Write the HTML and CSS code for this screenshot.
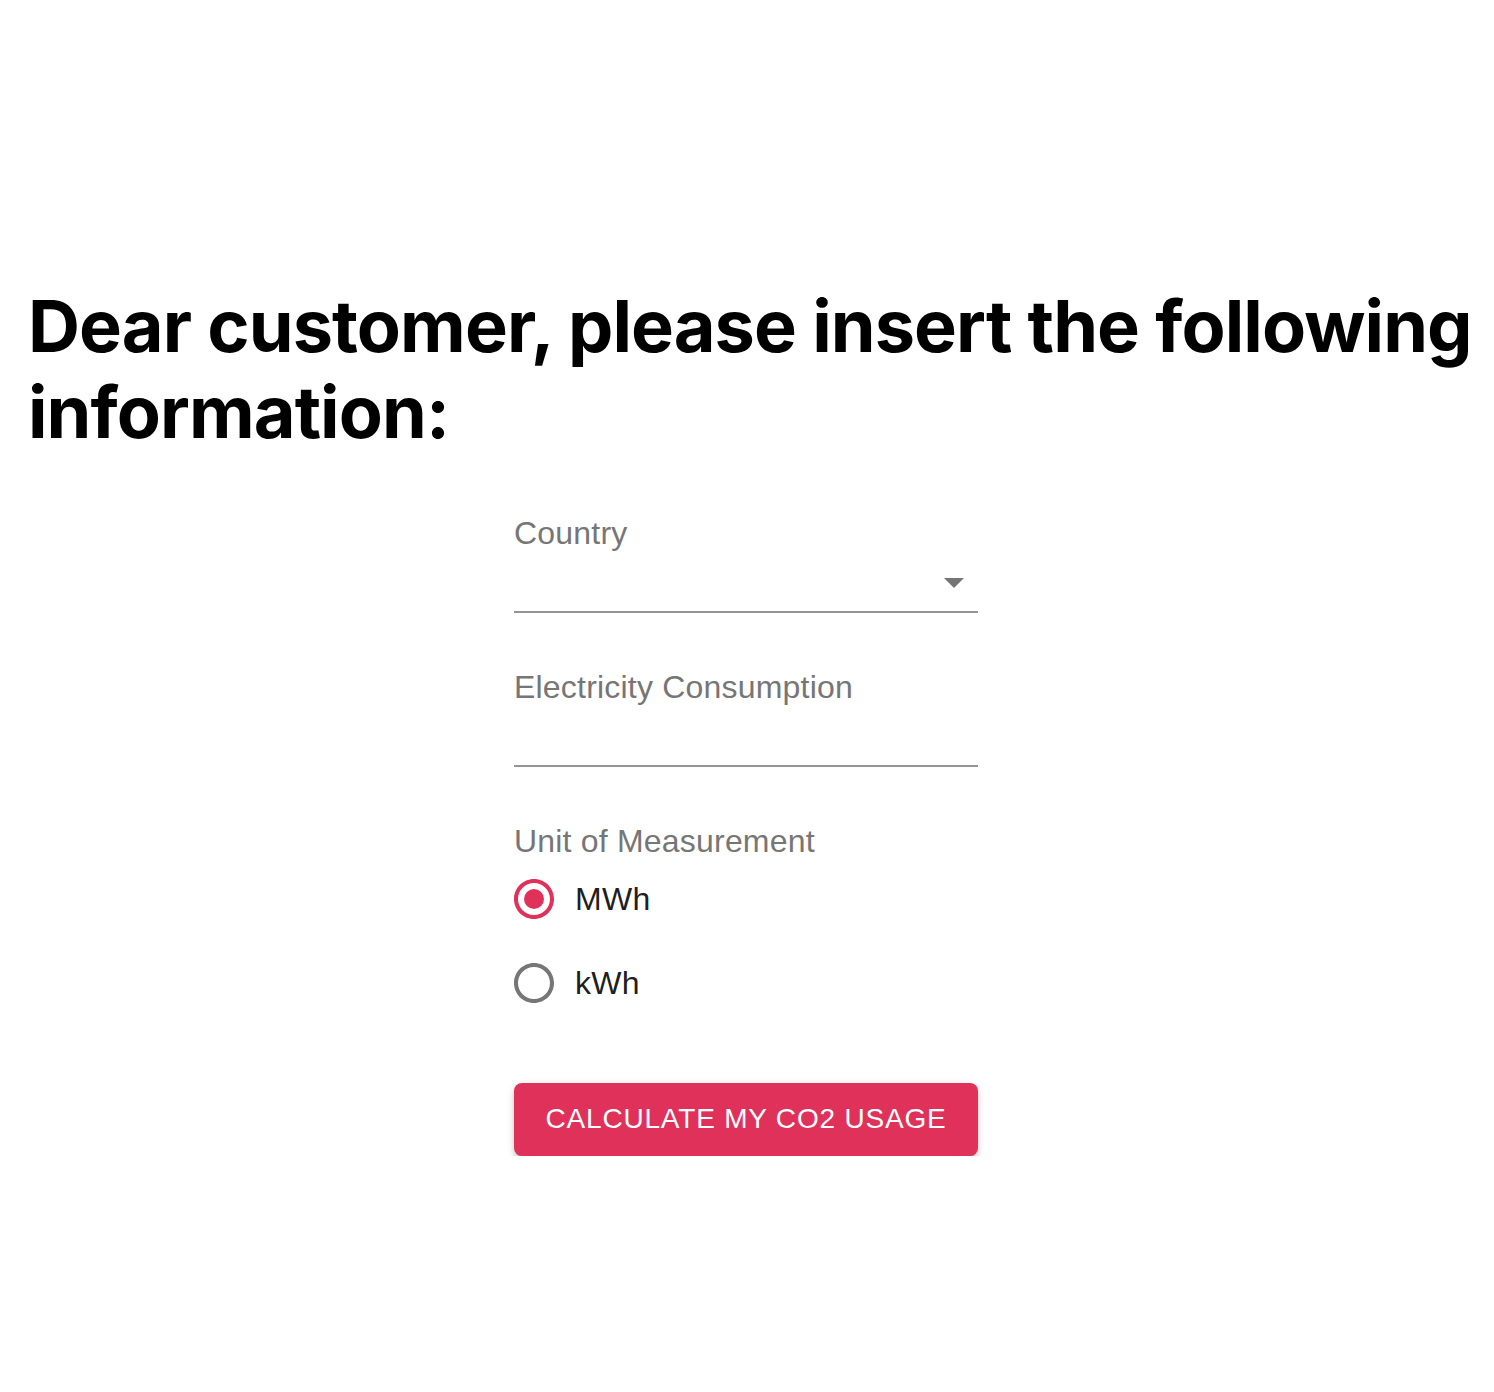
FILE: index.html
```html
<!DOCTYPE html>
<html lang="en">
<head>
<meta charset="utf-8">
<title>CO2 Calculator</title>
<link rel="stylesheet" href="styles.css">
</head>
<body>
<main class="page">
  <h1 class="title">Dear customer, please insert the following information:</h1>
  <form class="form">
    <div class="field">
      <label class="field-label">Country</label>
      <div class="field-input select">
        <svg class="arrow" viewBox="0 0 24 24" width="48" height="48" aria-hidden="true"><path d="M7 10l5 5 5-5z"/></svg>
      </div>
    </div>
    <div class="field">
      <label class="field-label">Electricity Consumption</label>
      <div class="field-input"></div>
    </div>
    <div class="field radios">
      <div class="field-label">Unit of Measurement</div>
      <div class="radio-row">
        <svg class="radio checked" viewBox="2 2 20 20" width="40" height="40" aria-hidden="true">
          <path d="M12 2C6.48 2 2 6.48 2 12s4.48 10 10 10 10-4.48 10-10S17.52 2 12 2zm0 18c-4.42 0-8-3.58-8-8s3.58-8 8-8 8 3.58 8 8-3.58 8-8 8z"/>
          <circle cx="12" cy="12" r="5"/>
        </svg>
        <span class="radio-text">MWh</span>
      </div>
      <div class="radio-row">
        <svg class="radio" viewBox="2 2 20 20" width="40" height="40" aria-hidden="true">
          <path d="M12 2C6.48 2 2 6.48 2 12s4.48 10 10 10 10-4.48 10-10S17.52 2 12 2zm0 18c-4.42 0-8-3.58-8-8s3.58-8 8-8 8 3.58 8 8-3.58 8-8 8z"/>
        </svg>
        <span class="radio-text">kWh</span>
      </div>
    </div>
    <button type="button" class="submit">Calculate my CO2 usage</button>
  </form>
</main>
</body>
</html>
```
FILE: styles.css
```css
html, body {
  margin: 0;
  padding: 0;
  background: #ffffff;
}

.page {
  padding: 283px 20px 0 28px;
  display: flex;
  flex-direction: column;
}

.title {
  margin: 0;
  font-family: Inter, "Liberation Sans", sans-serif;
  font-weight: 700;
  font-size: 72px;
  line-height: 86.4px;
  letter-spacing: -0.9px;
  color: #000;
}

.form {
  width: 464px;
  align-self: center;
  margin: 61px 0 0 -10px;
  display: flex;
  flex-direction: column;
  font-family: "Liberation Sans", Arial, sans-serif;
}

.field {
  display: flex;
  flex-direction: column;
  margin-bottom: 58px;
}

.field-label {
  font-size: 32px;
  line-height: 32px;
  letter-spacing: 0.2px;
  color: #767676;
}

.field-input {
  height: 62px;
  border-bottom: 2px solid #949494;
  position: relative;
}

.select .arrow {
  position: absolute;
  right: 0;
  top: 9px;
  fill: #757575;
}

.radios {
  margin-bottom: 58px;
}

.radio-row {
  height: 84px;
  display: flex;
  align-items: center;
}

.radio {
  flex: none;
  fill: #767676;
  margin-right: 21px;
}

.radio.checked {
  fill: #e0315a;
}

.radio-text {
  font-size: 32px;
  line-height: 32px;
  letter-spacing: 0.3px;
  color: rgba(0, 0, 0, 0.9);
}

.submit {
  height: 73px;
  border: none;
  border-radius: 8px;
  background: #e0315a;
  color: #ffffff;
  font-family: "Liberation Sans", Arial, sans-serif;
  font-size: 28px;
  font-weight: 400;
  letter-spacing: 0.8px;
  text-transform: uppercase;
  white-space: nowrap;
  padding: 0 16px;
  box-shadow: 0 6px 2px -4px rgba(0,0,0,0.2), 0 4px 4px 0 rgba(0,0,0,0.14), 0 2px 10px 0 rgba(0,0,0,0.12);
  cursor: pointer;
}
```
